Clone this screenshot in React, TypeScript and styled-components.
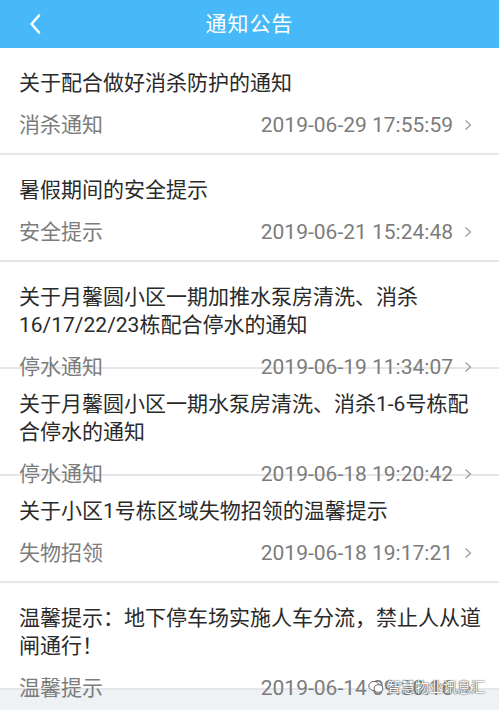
import React from "react";
import styled, { createGlobalStyle } from "styled-components";

const GlobalStyle = createGlobalStyle`
	html, body {
		margin: 0;
		padding: 0;
		background-color: #eef2f5;
		font-family: Roboto, "Noto Sans CJK SC", sans-serif;
	}
`;

const Page = styled.div`
	position: relative;
	width: 499px;
	height: 710px;
	overflow: hidden;
	background-color: #eef2f5;
`;

const Header = styled.div`
	height: 48px;
	background-color: #47b9f9;
	display: flex;
	align-items: center;
	justify-content: center;
	position: relative;
`;

const BackButton = styled.div`
	position: absolute;
	left: 26px;
	top: 12px;
	width: 18px;
	height: 24px;
	display: flex;
	align-items: center;
	justify-content: center;
`;

const Title = styled.div`
	color: #ffffff;
	font-size: 21px;
	line-height: 48px;
	letter-spacing: 1px;
`;

const List = styled.div`
	display: flex;
	flex-direction: column;
	background-color: #ffffff;
`;

const Item = styled.div`
	height: 107px;
	flex-shrink: 0;
	box-sizing: border-box;
	border-bottom: 2px solid #e6e6e6;
	padding: 21px 16px 0 19px;
	display: flex;
	flex-direction: column;
	gap: 14px;
	overflow: visible;
`;

const ItemTitle = styled.div`
	flex-shrink: 0;
	font-size: 21px;
	line-height: 28px;
	color: #2a2a2a;
`;

const Meta = styled.div`
	flex-shrink: 0;
	display: flex;
	align-items: center;
	justify-content: space-between;
	margin-right: 11px;
	font-size: 21px;
	line-height: 28px;
	color: #7c7c7c;
`;

const DateRow = styled.div`
	display: flex;
	align-items: center;
	gap: 11px;
`;

const Watermark = styled.div`
	position: absolute;
	right: 14px;
	bottom: 14px;
	display: flex;
	align-items: center;
	gap: 3px;
	font-size: 14px;
	line-height: 18px;
	color: #ffffff;
	text-shadow: 0 0 1px #555, 0 0 1px #555, 0 0 2px #777;
`;

const notices = [
	{ title: "关于配合做好消杀防护的通知", tag: "消杀通知", date: "2019-06-29 17:55:59" },
	{ title: "暑假期间的安全提示", tag: "安全提示", date: "2019-06-21 15:24:48" },
	{ title: "关于月馨圆小区一期加推水泵房清洗、消杀16/17/22/23栋配合停水的通知", tag: "停水通知", date: "2019-06-19 11:34:07" },
	{ title: "关于月馨圆小区一期水泵房清洗、消杀1-6号栋配合停水的通知", tag: "停水通知", date: "2019-06-18 19:20:42" },
	{ title: "关于小区1号栋区域失物招领的温馨提示", tag: "失物招领", date: "2019-06-18 19:17:21" },
	{ title: "温馨提示：地下停车场实施人车分流，禁止人从道闸通行！", tag: "温馨提示", date: "2019-06-14 09:30:16" },
];

const Chevron = () => (
	<svg width="8" height="12" viewBox="0 0 8 12">
		<polyline points="1.5,1.5 6.5,6 1.5,10.5" fill="none" stroke="#9a9a9a" strokeWidth="1.2" />
	</svg>
);

function App() {
	return (
		<Page>
			<GlobalStyle />
			<Header>
				<BackButton>
					<svg width="14" height="22" viewBox="0 0 14 22">
						<polyline points="11,2.5 3.5,11 11,19.5" fill="none" stroke="#ffffff" strokeWidth="2.6" strokeLinecap="round" strokeLinejoin="round" />
					</svg>
				</BackButton>
				<Title>通知公告</Title>
			</Header>
			<List>
				{notices.map((n) => (
					<Item key={n.date}>
						<ItemTitle>{n.title}</ItemTitle>
						<Meta>
							<span>{n.tag}</span>
							<DateRow>
								<span>{n.date}</span>
								<Chevron />
							</DateRow>
						</Meta>
					</Item>
				))}
			</List>
			<Watermark>
				<svg width="16" height="14" viewBox="0 0 16 14">
					<ellipse cx="6" cy="6" rx="5.2" ry="4.6" fill="#fff" stroke="#666" strokeWidth="1" />
					<ellipse cx="10.5" cy="8.5" rx="4.3" ry="3.8" fill="#fff" stroke="#666" strokeWidth="1" />
				</svg>
				<span>智慧物业讯息汇</span>
			</Watermark>
		</Page>
	);
}

export default App;
